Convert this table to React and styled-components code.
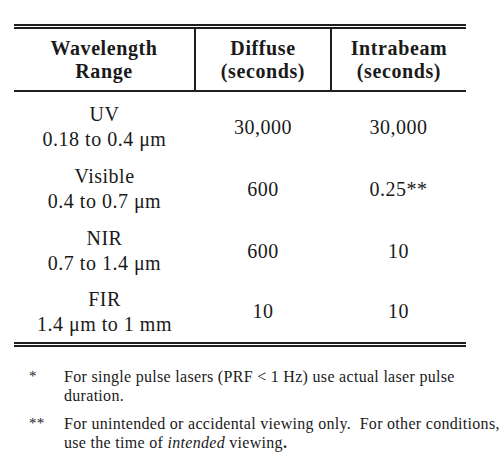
import { createGlobalStyle } from "styled-components"
import styled from "styled-components"

const serif = `"Liberation Serif", "Times New Roman", Tinos, "Nimbus Roman", FreeSerif, "DejaVu Serif", serif`

const GlobalStyle = createGlobalStyle`
  html, body {
    margin: 0;
    padding: 0;
    background: #ffffff;
  }
  body {
    font-family: ${serif};
    color: #1a1a1a;
  }
`;

const Page = styled.div`
  width: 500px;
  height: 456px;
  overflow: hidden;
  padding-top: 24px;
  box-sizing: border-box;
`;

const Table = styled.table`
  margin-left: 14px;
  width: 452px;
  border-collapse: collapse;
  table-layout: fixed;
  font-family: ${serif};
  border-top: 5px double #1e1e1e;
  border-bottom: 5px double #1e1e1e;
`;

const HeadRow = styled.tr`
  border-bottom: 2px solid #1e1e1e;
`;

const HeadCell = styled.th`
  height: 61px;
  padding: 0;
  font-size: 20px;
  font-weight: 700;
  letter-spacing: 0.6px;
  line-height: 23px;
  text-align: center;
  vertical-align: middle;
  border-left: ${({ $first }) => ($first ? "none" : "2px solid #1e1e1e")};
`;

const Spacer = styled.tr`
  height: 5px;
`;

const Row = styled.tr`
  height: 62px;
`;

const Cell = styled.td`
  padding: 0;
  font-size: 20px;
  letter-spacing: 0.5px;
  line-height: 25px;
  text-align: center;
  vertical-align: middle;
`;

const Notes = styled.div`
  margin-top: 20px;
  padding-left: 29px;
  display: flex;
  flex-direction: column;
  gap: 8px;
`;

const Note = styled.div`
  display: grid;
  grid-template-columns: 35px 1fr;
  font-size: 16px;
  letter-spacing: 0.3px;
  line-height: 19.5px;
  white-space: nowrap;
`;

const Mark = styled.span`
  font-size: 15px;
`;

const rows = [
  { name: "UV", range: "0.18 to 0.4 \u03bcm", diffuse: "30,000", intra: "30,000" },
  { name: "Visible", range: "0.4 to 0.7 \u03bcm", diffuse: "600", intra: "0.25**" },
  { name: "NIR", range: "0.7 to 1.4 \u03bcm", diffuse: "600", intra: "10" },
  { name: "FIR", range: "1.4 \u03bcm to 1 mm", diffuse: "10", intra: "10" },
]

const App = () => {
  return (
    <Page>
      <GlobalStyle />
      <Table>
        <colgroup>
          <col style={{ width: 181 }} />
          <col style={{ width: 136 }} />
          <col style={{ width: 135 }} />
        </colgroup>
        <thead>
          <HeadRow>
            <HeadCell $first>Wavelength<br />Range</HeadCell>
            <HeadCell>Diffuse<br />(seconds)</HeadCell>
            <HeadCell>Intrabeam<br />(seconds)</HeadCell>
          </HeadRow>
        </thead>
        <tbody>
          <Spacer />
          {rows.map((r) => (
            <Row key={r.name}>
              <Cell>{r.name}<br />{r.range}</Cell>
              <Cell>{r.diffuse}</Cell>
              <Cell>{r.intra}</Cell>
            </Row>
          ))}
        </tbody>
      </Table>
      <Notes>
        <Note>
          <Mark>*</Mark>
          <span>
            For single pulse lasers (PRF &lt; 1 Hz) use actual laser pulse<br />
            duration.
          </span>
        </Note>
        <Note>
          <Mark>**</Mark>
          <span>
            For unintended or accidental viewing only.&nbsp; For other conditions,<br />
            use the time of <i>intended</i> viewing<b>.</b>
          </span>
        </Note>
      </Notes>
    </Page>
  )
}

export default App
